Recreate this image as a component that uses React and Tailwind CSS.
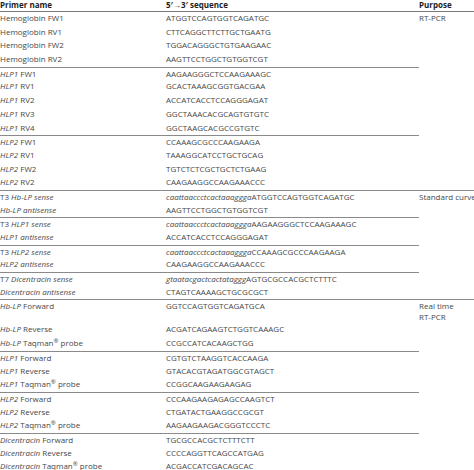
const groups = [
  {
    full: false,
    purpose: 'RT-PCR',
    rows: [
      [['Hemoglobin FW1']], 'ATGGTCCAGTGGTCAGATGC',
      [['Hemoglobin RV1']], 'CTTCAGGCTTCTTGCTGAATG',
      [['Hemoglobin FW2']], 'TGGACAGGGCTGTGAAGAAC',
      [['Hemoglobin RV2']], 'AAGTTCCTGGCTGTGGTCGT',
    ],
  },
  {
    rows: [
      [['HLP1', 'i'], [' FW1']], 'AAGAAGGGCTCCAAGAAAGC',
      [['HLP1', 'i'], [' RV1']], 'GCACTAAAGCGGTGACGAA',
      [['HLP1', 'i'], [' RV2']], 'ACCATCACCTCCAGGGAGAT',
      [['HLP1', 'i'], [' RV3']], 'GGCTAAACACGCAGTGTGTC',
      [['HLP1', 'i'], [' RV4']], 'GGCTAAGCACGCCGTGTC',
    ],
  },
  {
    rows: [
      [['HLP2', 'i'], [' FW1']], 'CCAAAGCGCCCAAGAAGA',
      [['HLP2', 'i'], [' RV1']], 'TAAAGGCATCCTGCTGCAG',
      [['HLP2', 'i'], [' FW2']], 'TGTCTCTCGCTGCTCTGAAG',
      [['HLP2', 'i'], [' RV2']], 'CAAGAAGGCCAAGAAACCC',
    ],
  },
  {
    full: true,
    purpose: 'Standard curve',
    rows: [
      [['T3 '], ['Hb-LP sense', 'i']], ['caattaaccctcactaaaggga', 'ATGGTCCAGTGGTCAGATGC'],
      [['Hb-LP antisense', 'i']], 'AAGTTCCTGGCTGTGGTCGT',
    ],
  },
  {
    rows: [
      [['T3 '], ['HLP1 sense', 'i']], ['caattaaccctcactaaaggga', 'AAGAAGGGCTCCAAGAAAGC'],
      [['HLP1 antisense', 'i']], 'ACCATCACCTCCAGGGAGAT',
    ],
  },
  {
    rows: [
      [['T3 '], ['HLP2 sense', 'i']], ['caattaaccctcactaaaggga', 'CCAAAGCGCCCAAGAAGA'],
      [['HLP2 antisense', 'i']], 'CAAGAAGGCCAAGAAACCC',
    ],
  },
  {
    rows: [
      [['T7 '], ['Dicentracin sense', 'i']], ['gtaatacgactcactataggg', 'AGTGCGCCACGCTCTTTC'],
      [['Dicentracin antisense', 'i']], 'CTAGTCAAAAGCTGCGCGCT',
    ],
  },
  {
    full: true,
    purpose: 'Real time RT-PCR',
    rows: [
      [['Hb-LP', 'i'], [' Forward']], 'GGTCCAGTGGTCAGATGCA',
      [['Hb-LP', 'i'], [' Reverse']], 'ACGATCAGAAGTCTGGTCAAAGC',
      [['Hb-LP', 'i'], [' Taqman'], ['®', 's'], [' probe']], 'CCGCCATCACAAGCTGG',
    ],
  },
  {
    rows: [
      [['HLP1', 'i'], [' Forward']], 'CGTGTCTAAGGTCACCAAGA',
      [['HLP1', 'i'], [' Reverse']], 'GTACACGTAGATGGCGTAGCT',
      [['HLP1', 'i'], [' Taqman'], ['®', 's'], [' probe']], 'CCGGCAAGAAGAAGAG',
    ],
  },
  {
    rows: [
      [['HLP2', 'i'], [' Forward']], 'CCCAAGAAGAGAGCCAAGTCT',
      [['HLP2', 'i'], [' Reverse']], 'CTGATACTGAAGGCCGCGT',
      [['HLP2', 'i'], [' Taqman'], ['®', 's'], [' probe']], 'AAGAAGAAGACGGGTCCCTC',
    ],
  },
  {
    rows: [
      [['Dicentracin', 'i'], [' Forward']], 'TGCGCCACGCTCTTTCTT',
      [['Dicentracin', 'i'], [' Reverse']], 'CCCCAGGTTCAGCCATGAG',
      [['Dicentracin', 'i'], [' Taqman'], ['®', 's'], [' probe']], 'ACGACCATCGACAGCAC',
    ],
  },
];

const Name = ({ parts }) =>
  parts.map(([text, kind], i) => {
    if (kind === 'i') return <i key={i}>{text}</i>;
    if (kind === 's') return <sup key={i} className="text-[6px] top-[-3px]">{text}</sup>;
    return <span key={i}>{text}</span>;
  });

const Seq = ({ seq }) =>
  Array.isArray(seq) ? (
    <>
      <i>{seq[0]}</i>
      {seq[1]}
    </>
  ) : (
    seq
  );

const App = () => {
  return (
    <div
      className="w-[474px] h-[470px] overflow-hidden bg-white text-[#474747] text-[8px] whitespace-nowrap"
      style={{ fontFamily: '"Open Sans", "Noto Sans", sans-serif' }}
    >
      {/* Header */}
      <div className="grid grid-cols-[165px_254px_55px] h-[12px] leading-[10px] font-bold text-[#1e1e1e] border-b border-[#7a7a7a]">
        <div>Primer name</div>
        <div className="pl-px">5′→3′ sequence</div>
        <div>Purpose</div>
      </div>

      {groups.map((g, gi) => {
        const rows = [];
        for (let r = 0; r < g.rows.length; r += 2) rows.push([g.rows[r], g.rows[r + 1]]);
        return rows.map(([name, seq], ri) => {
          const first = ri === 0 && gi > 0;
          const line = first ? 'border-t border-[#8a8a8a]' : '';
          const tall = ri === 0 && g.purpose === 'Real time RT-PCR';
          return (
            <div
              key={`${gi}-${ri}`}
              className={`grid grid-cols-[165px_254px_55px] ${tall ? 'h-[24px]' : 'h-[13.7px]'} leading-[11px]`}
            >
              <div className={line}>
                <Name parts={name} />
              </div>
              <div className={`${line} pl-px`}>
                <Seq seq={seq} />
              </div>
              <div className={first && g.full ? line : ''}>
                {tall ? (
                  <>
                    Real time
                    <br />
                    RT-PCR
                  </>
                ) : ri === 0 ? (
                  g.purpose
                ) : null}
              </div>
            </div>
          );
        });
      })}
    </div>
  );
};

export default App;
